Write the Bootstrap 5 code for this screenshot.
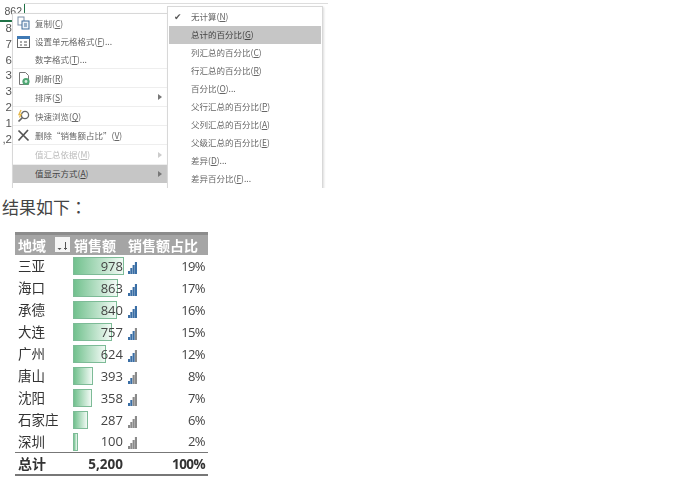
<!DOCTYPE html>
<html lang="zh"><head><meta charset="utf-8">
<link href="https://cdn.jsdelivr.net/npm/bootstrap@5.3.0/dist/css/bootstrap.min.css" rel="stylesheet">
<style>
html,body{margin:0;background:#fff;width:680px;height:482px;overflow:hidden;font-family:"Noto Sans CJK SC","Liberation Sans",sans-serif}
.shot{position:relative;width:330px;height:188px;overflow:hidden;filter:blur(.35px)}
.topline{position:absolute;left:24px;top:3px;width:304px;border-top:1px solid #ddd}
.sheet-col{padding-top:21px}
.sheet-cell{height:15.8px;width:12px;font:11.5px/15.8px "Liberation Sans",sans-serif;color:#555;text-align:right}
.active-cell{position:absolute;left:0;top:4px;width:25px;height:18px;border:1px solid #1e7145;border-width:0 1px 2px 0;font:10.5px/14px "Liberation Sans",sans-serif;color:#555;text-align:right;padding-right:2px}
.ctx{position:absolute;background:#fff;border:1px solid #d8d8d8;box-shadow:1px 1px 2px #ddd;font-size:8.5px;color:#666}
.ctx-a{left:12px;top:13px;width:156px;height:176px}
.ctx-b{left:167px;top:6px;width:156px;height:184px;padding:1px 1px 0}
.mi{display:flex;align-items:center;padding-left:22px;position:relative;line-height:1}
.ctx-a .mi{height:19.1px;border-bottom:1px solid #eee}
.ctx-a .mi.plain{border-bottom:0;height:18px}
.ctx-b .mi{height:18px;padding-bottom:1px}
.mi.hi{background:#c6c6c6;color:#444}
.mi.off{color:#bbb}
.mi u{text-underline-offset:1px}
.mico{position:absolute;left:3px;top:2px;width:15px;height:15px}
.arw{position:absolute;right:5px;top:50%;margin-top:-3px;border-left:4px solid #777;border-top:3px solid transparent;border-bottom:3px solid transparent}
.arw.off{border-left-color:#ccc}
.tick{position:absolute;left:5px;top:3px;font:9px/12px "DejaVu Sans",sans-serif;color:#555}
.lead-line{font-size:17px;line-height:24px;color:#444;margin:0;padding:7px 0 0 2px;height:44px}
.tc-colon{font-family:"Noto Sans CJK TC",sans-serif}
.rpt{margin-left:15px;width:193px;table-layout:fixed;border-collapse:collapse;font-size:13.5px;color:#333;filter:blur(.25px)}
.rpt th,.rpt td{padding:0;height:22px;line-height:1;font-weight:400;border:0;white-space:nowrap;vertical-align:middle}
.rpt thead th{height:21px;background:#a5a5a5;color:#fff;font-weight:700;font-size:14px;border-top:3px solid #8c8c8c}
.cw1{width:58px}.cw2{width:51px}.cw3{width:14px}.cw4{width:70px}
.c1{padding-left:3px!important}
.hd-flex{display:flex;justify-content:space-between;align-items:center;padding-right:3px}
.h-b{padding-left:1px!important}
.h-c{padding-left:4px!important}
.c3{padding-left:4px!important}
.c4{text-align:right;padding-right:3px!important}
.num{font:13px/1 "Open Sans",sans-serif;color:#444}
.pct{letter-spacing:-.6px}
.valcell{position:relative;text-align:right;padding-right:1px!important}
.valtxt{position:relative}
.databar{position:absolute;left:0;top:2px;height:18px;border:1px solid #7dbb97;background:linear-gradient(90deg,#72c18e,#f2faf5)}
.filt{display:flex;width:15px;height:15px;background:#f5f5f5}
.rpt tfoot td{font-weight:700;border-top:1px solid #777;border-bottom:2px solid #777;color:#333;font-size:14px}
.rpt tfoot .num{font:700 13.5px/1 "Open Sans",sans-serif;color:#333}
.sig{display:block;margin-top:4px}
</style></head><body>
<div class="shot">
 <div class="topline"></div>
 <div class="active-cell">862</div>
 <div class="sheet-col">
  <div class="sheet-cell">8</div><div class="sheet-cell">7</div><div class="sheet-cell">6</div><div class="sheet-cell">3</div><div class="sheet-cell">3</div><div class="sheet-cell">2</div><div class="sheet-cell">1</div><div class="sheet-cell">,2</div>
 </div>
 <div class="ctx ctx-a">
  <div class="mi plain"><svg class="mico" viewBox="0 0 15 15"><rect x="2" y="1" width="6" height="8" fill="#fff" stroke="#7a8ea5"/><rect x="6" y="5" width="7" height="8" fill="#eef3f8" stroke="#3f6c9a"/><path d="M8 8h3M8 10h3" stroke="#3f6c9a"/></svg>复制(<u>C</u>)</div>
  <div class="mi plain"><svg class="mico" viewBox="0 0 15 15"><rect x="1.5" y="2.5" width="12" height="11" fill="#fff" stroke="#666"/><rect x="1" y="2" width="13" height="3" fill="#3f7ab5"/><path d="M4 8h2M8 8h3M4 11h2M8 11h3" stroke="#555"/></svg>设置单元格格式(<u>F</u>)...</div>
  <div class="mi">数字格式(<u>T</u>)...</div>
  <div class="mi"><svg class="mico" viewBox="0 0 15 15"><path d="M3.5 1.5h6l3 3v9h-9z" fill="#fff" stroke="#777"/><circle cx="10" cy="10.5" r="3.6" fill="#4ea672"/><circle cx="10" cy="10.5" r="1.4" fill="#d7efe0"/></svg>刷新(<u>R</u>)</div>
  <div class="mi">排序(<u>S</u>)<span class="arw"></span></div>
  <div class="mi"><svg class="mico" viewBox="0 0 15 15"><circle cx="9" cy="6" r="3.6" fill="#fff" stroke="#666" stroke-width="1.3"/><path d="M6.4 8.6L2.5 12.5" stroke="#666" stroke-width="1.6"/><path d="M5 1L3 5.5h2L3.5 8.5" fill="none" stroke="#e6b84a" stroke-width="1.4"/></svg>快速浏览(<u>Q</u>)</div>
  <div class="mi"><svg class="mico" viewBox="0 0 15 15"><path d="M2.5 2.5L12.5 12.5M12 2L2.5 12.5" stroke="#555" stroke-width="1.7"/></svg>删除“销售额占比”(<u>V</u>)</div>
  <div class="mi off">值汇总依据(<u>M</u>)<span class="arw off"></span></div>
  <div class="mi hi plain">值显示方式(<u>A</u>)<span class="arw"></span></div>
 </div>
 <div class="ctx ctx-b">
  <div class="mi"><span class="tick">✔</span>无计算(<u>N</u>)</div>
  <div class="mi hi">总计的百分比(<u>G</u>)</div>
  <div class="mi">列汇总的百分比(<u>C</u>)</div>
  <div class="mi">行汇总的百分比(<u>R</u>)</div>
  <div class="mi">百分比(<u>O</u>)...</div>
  <div class="mi">父行汇总的百分比(<u>P</u>)</div>
  <div class="mi">父列汇总的百分比(<u>A</u>)</div>
  <div class="mi">父级汇总的百分比(<u>E</u>)</div>
  <div class="mi">差异(<u>D</u>)...</div>
  <div class="mi">差异百分比(<u>F</u>)...</div>
 </div>
</div>
<p class="lead-line">结果如下<span class="tc-colon" lang="zh-TW">：</span></p>
<table class="rpt">
<colgroup><col class="cw1"><col class="cw2"><col class="cw3"><col class="cw4"></colgroup>
<thead><tr><th class="c1"><div class="hd-flex">地域<span class="filt"><svg width="15" height="15" viewBox="0 0 15 15"><path d="M2.5 11h4l-2 2z" fill="#555"/><path d="M10.5 5v7.5M9 11l1.5 1.5L12 11" fill="none" stroke="#555"/></svg></span></div></th><th class="h-b">销售额</th><th class="h-c" colspan="2">销售额占比</th></tr></thead>
<tbody id="b"></tbody>
<tfoot><tr><td class="c1">总计</td><td class="valcell"><span class="num">5,200</span></td><td></td><td class="c4"><span class="num pct">100%</span></td></tr></tfoot>
</table>
<script>
const d=[["三亚",978,51,"19%",4],["海口",863,45,"17%",4],["承德",840,44,"16%",4],["大连",757,39,"15%",3],["广州",624,33,"12%",3],["唐山",393,20,"8%",2],["沈阳",358,19,"7%",2],["石家庄",287,15,"6%",0],["深圳",100,5,"2%",0]];
document.getElementById('b').innerHTML=d.map(r=>{const h=[3,6,9,12];let s='';h.forEach((v,i)=>{s+=`<rect x="${i*2.3}" y="${12-v}" width="2.1" height="${v}" fill="${i<r[4]?'#3a6ea5':'#8a8a8a'}"/>`});
return `<tr><td class="c1">${r[0]}</td><td class="valcell"><span class="databar" style="width:${r[2]}px"></span><span class="num valtxt">${r[1]}</span></td><td class="c3"><svg class="sig" width="9" height="12" viewBox="0 0 9 12">${s}</svg></td><td class="c4"><span class="num pct">${r[3]}</span></td></tr>`}).join('');
</script>
<script src="https://cdn.jsdelivr.net/npm/bootstrap@5.3.0/dist/js/bootstrap.bundle.min.js"></script>
</body></html>
